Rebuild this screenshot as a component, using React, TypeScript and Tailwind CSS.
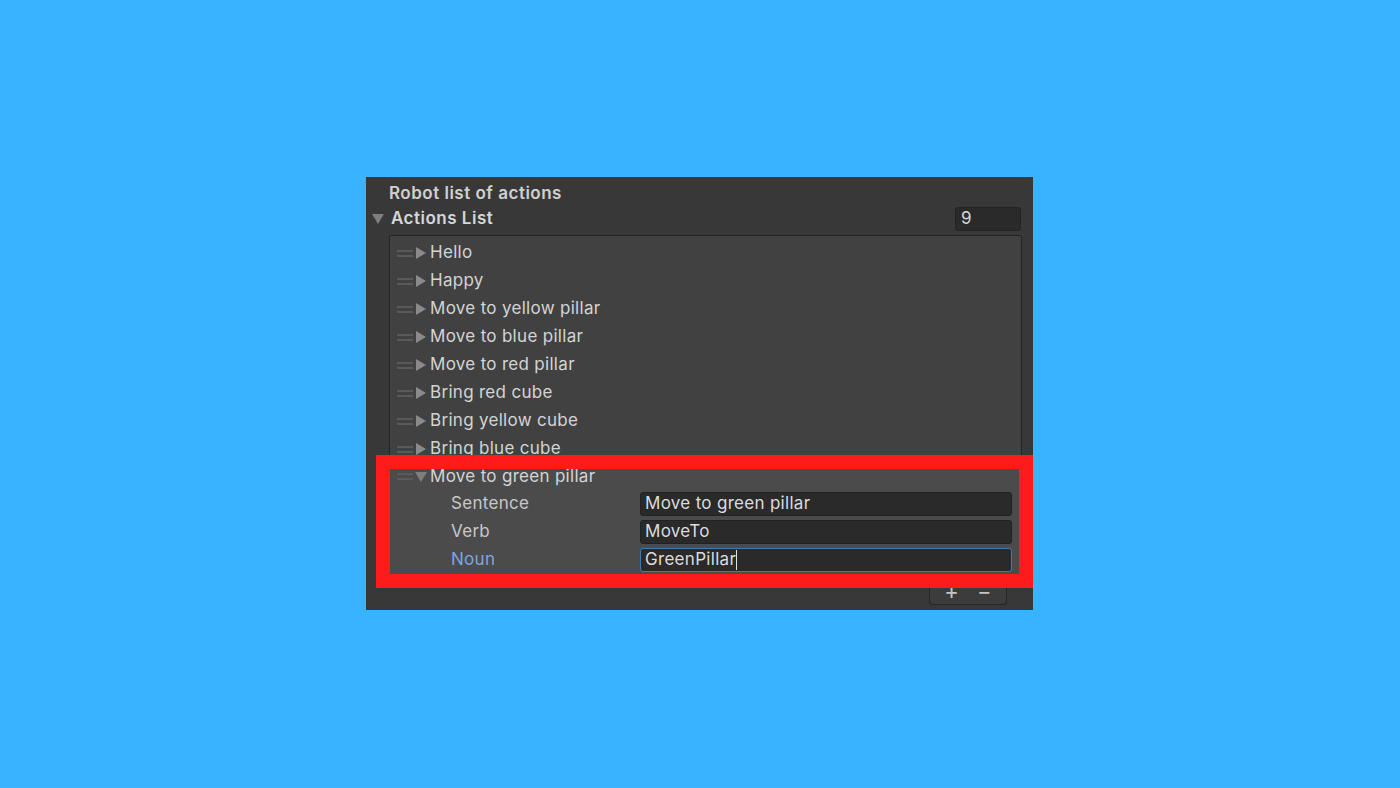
import React from 'react';

const items = [
  'Hello',
  'Happy',
  'Move to yellow pillar',
  'Move to blue pillar',
  'Move to red pillar',
  'Bring red cube',
  'Bring yellow cube',
  'Bring blue cube',
];

const fields = [
  { label: 'Sentence', value: 'Move to green pillar', focused: false },
  { label: 'Verb', value: 'MoveTo', focused: false },
  { label: 'Noun', value: 'GreenPillar', focused: true },
];

const Handle: React.FC = () => (
  <div className="w-[16px] flex flex-col gap-[3px] shrink-0">
    <div className="h-[2px] bg-[#5a5a5a]" />
    <div className="h-[2px] bg-[#5a5a5a]" />
  </div>
);

const TriRight: React.FC = () => (
  <svg width="10" height="12" viewBox="0 0 10 12" className="shrink-0">
    <path d="M0 0 L10 6 L0 12 Z" fill="#8a8a8a" />
  </svg>
);

const TriDown: React.FC = () => (
  <svg width="12" height="10" viewBox="0 0 12 10" className="shrink-0">
    <path d="M0 0 L12 0 L6 10 Z" fill="#7e7e7e" />
  </svg>
);

const App: React.FC = () => {
  return (
    <div
      className="w-[1400px] h-[788px] bg-[#38b4fe] pt-[177px] pl-[366px] overflow-hidden"
      style={{ fontFamily: 'Inter, "Noto Sans", sans-serif' }}
    >
      <div className="relative w-[667px] h-[433px] bg-[#383838] text-[#d4d4d4] text-[17px] tracking-[0.3px]">
        {/* Header */}
        <div className="pl-[23px] h-[30px] flex items-center pt-[4px] font-semibold text-[#d0d0d0] tracking-[0.5px]">
          Robot list of actions
        </div>
        <div className="h-[24px] flex items-center pl-[6px] pr-[12px]">
          <TriDown />
          <span className="ml-[7px] font-semibold text-[#d6d6d6] tracking-[0.5px]">Actions List</span>
          <div className="ml-auto w-[66px] h-[24px] bg-[#2a2a2a] border border-[#232323] rounded-[3px] flex items-center pl-[5px] text-[#d8d8d8]">
            9
          </div>
        </div>

        {/* List box */}
        <div className="ml-[23px] mr-[11px] mt-[4px] bg-[#414141] border border-[#242424] rounded-[2px] pt-[3px] pb-[2px]">
          {items.map((it) => (
            <div key={it} className="h-[28px] flex items-center pl-[7px]">
              <Handle />
              <div className="ml-[3px]">
                <TriRight />
              </div>
              <span className="ml-[4px]">{it}</span>
            </div>
          ))}
          <div className="bg-[#4b4b4b]">
            <div className="h-[27px] flex items-center pl-[7px]">
              <Handle />
              <div className="ml-[2px]">
                <TriDown />
              </div>
              <span className="ml-[3px]">Move to green pillar</span>
            </div>
            {fields.map((f) => (
              <div key={f.label} className="h-[28px] flex items-center pl-[61px] pr-[9px]">
                <span className={`w-[189px] ${f.focused ? 'text-[#7ba6e4]' : 'text-[#c8c8c8]'}`}>{f.label}</span>
                <div
                  className={`flex-1 h-[24px] rounded-[3px] flex items-center pl-[4px] bg-[#2a2a2a] text-[#dcdcdc] border ${
                    f.focused ? 'border-[#3d7ab8]' : 'border-[#212121]'
                  }`}
                >
                  {f.value}
                  {f.focused && <span className="w-[1px] h-[20px] bg-[#e0e0e0]" />}
                </div>
              </div>
            ))}
          </div>
        </div>

        {/* Footer buttons */}
        <div className="flex justify-end pr-[26px]">
          <div className="w-[78px] h-[28px] bg-[#3c3c3c] border border-[#262626] border-t-0 rounded-b-[4px] flex items-center justify-center gap-[18px] text-[#c4c4c4] text-[22px] leading-none">
            <span>+</span>
            <span>−</span>
          </div>
        </div>

        {/* Annotation highlight */}
        <div className="absolute left-[10px] top-[278px] w-[657px] h-[133px] border-[14px] border-[#fe1b1b] pointer-events-none" />
      </div>
    </div>
  );
};

export default App;
